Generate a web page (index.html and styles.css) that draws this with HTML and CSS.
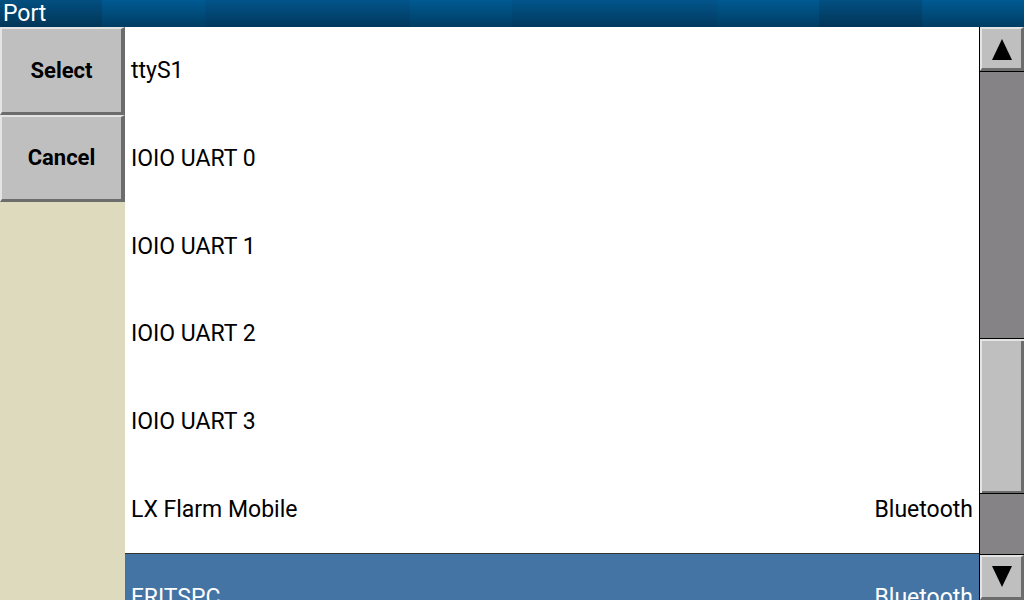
FILE: index.html
```html
<!DOCTYPE html>
<html>
<head>
<meta charset="utf-8">
<link rel="stylesheet" href="styles.css">
</head>
<body>
<div class="app">
  <header class="title">Port</header>
  <div class="main">
    <aside class="side">
      <button class="btn">Select</button>
      <button class="btn">Cancel</button>
    </aside>
    <ul class="list">
      <li class="row"><span>ttyS1</span></li>
      <li class="row"><span>IOIO UART 0</span></li>
      <li class="row"><span>IOIO UART 1</span></li>
      <li class="row"><span>IOIO UART 2</span></li>
      <li class="row"><span>IOIO UART 3</span></li>
      <li class="row"><span>LX Flarm Mobile</span><span>Bluetooth</span></li>
      <li class="row sel"><span>FRITSPC</span><span>Bluetooth</span></li>
    </ul>
    <div class="scroll">
      <div class="sbtn">
        <svg width="22" height="22" viewBox="0 0 22 22"><polygon points="11,1 21,22 1,22" fill="#000"/></svg>
      </div>
      <div class="track">
        <div class="thumb"></div>
      </div>
      <div class="sbtn down">
        <svg width="22" height="22" viewBox="0 0 22 22"><polygon points="1,0 21,0 11,21" fill="#000"/></svg>
      </div>
    </div>
  </div>
</div>
</body>
</html>
```

FILE: styles.css
```css
html, body {
  margin: 0;
  padding: 0;
  width: 1024px;
  height: 600px;
  overflow: hidden;
  font-family: Roboto, "Liberation Sans", sans-serif;
}
.app {
  display: flex;
  flex-direction: column;
  height: 600px;
}
.title {
  height: 27px;
  flex: none;
  color: #fff;
  font-size: 23px;
  line-height: 27px;
  padding-left: 3px;
  background:
    linear-gradient(to bottom, rgba(0,0,0,0) 0%, rgba(0,0,0,0.32) 100%),
    linear-gradient(to right,
      #024f80 0, #024f80 102px,
      #005a92 102px, #005a92 205px,
      #02548a 205px, #02548a 307px,
      #02548a 307px, #02548a 410px,
      #005a92 410px, #005a92 512px,
      #02558b 512px, #02558b 717px,
      #005a92 717px, #005a92 819px,
      #024f82 819px, #024f82 922px,
      #005a92 922px, #005a92 1024px);
}
.main {
  flex: 1;
  display: grid;
  grid-template-columns: 125px 1fr 45px;
  min-height: 0;
}
.side {
  background: #dedabd;
  display: flex;
  flex-direction: column;
}
.btn {
  height: 87.67px;
  box-sizing: border-box;
  width: 125px;
  margin: 0;
  padding: 0;
  background: #bfbfbf;
  border-style: solid;
  border-width: 2px 4px 3px 2px;
  border-color: #e4e4e4 #6c6c6c #6c6c6c #e4e4e4;
  font-family: Roboto, "Liberation Sans", sans-serif;
  font-weight: bold;
  font-size: 22px;
  color: #000;
}
.list {
  list-style: none;
  margin: 0;
  padding: 0;
  background: #fff;
  overflow: hidden;
}
.row {
  height: 87.67px;
  box-sizing: border-box;
  display: flex;
  align-items: center;
  justify-content: space-between;
  padding: 0 6px 0 6px;
  font-size: 23px;
  color: #000;
}
.row.sel {
  background: #4374a3;
  color: #fff;
  border-top: 1px solid #333;
}
.scroll {
  border-left: 1px solid #000;
  background: #858385;
  display: flex;
  flex-direction: column;
  min-height: 0;
}
.sbtn {
  height: 44px;
  flex: none;
  box-sizing: border-box;
  background: #bfbfbf;
  border-style: solid;
  border-width: 2px 3px 3px 2px;
  border-color: #e4e4e4 #6c6c6c #6c6c6c #e4e4e4;
  display: flex;
  align-items: center;
  justify-content: center;
}
.sbtn.down {
  height: 45px;
  align-items: flex-start;
  padding-top: 9px;
}
.track {
  flex: 1;
  border-top: 1px solid #000;
  border-bottom: 1px solid #000;
}
.thumb {
  margin-top: 266px;
  height: 156px;
  box-sizing: border-box;
  border-top: 1px solid #000;
  border-bottom: 1px solid #000;
  background: #bfbfbf;
  box-shadow: inset 2px 2px 0 #e4e4e4, inset -3px -2px 0 #6c6c6c;
}
```
